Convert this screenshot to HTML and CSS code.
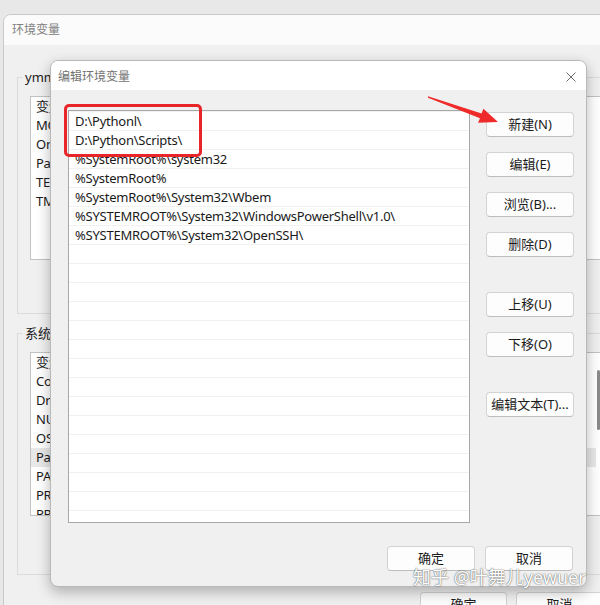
FILE: index.html
```html
<!DOCTYPE html>
<html lang="zh-CN">
<head>
<meta charset="utf-8">
<title>编辑环境变量</title>
<link rel="stylesheet" href="styles.css">
</head>
<body>
<div class="desktop">
  <div class="bgwin">
    <div class="bgwin-title">环境变量</div>
    <div class="bgwin-body">
      <div class="group group-user">
        <div class="group-label">ymm 的用户变量(U)</div>
        <div class="bglist">
          <div class="bgrows">
            <div class="bgrow head"><span class="c1">变量</span><span>值</span></div>
            <div class="bgrow"><span class="c1">MOZ_PLUGIN_PATH</span><span>C:\Program Files</span></div>
            <div class="bgrow"><span class="c1">OneDrive</span><span>C:\Users\ymm\OneDrive</span></div>
            <div class="bgrow"><span class="c1">Path</span><span>D:\Python\Scripts\</span></div>
            <div class="bgrow"><span class="c1">TEMP</span><span>C:\Users\ymm\AppData\Local\Temp</span></div>
            <div class="bgrow"><span class="c1">TMP</span><span>C:\Users\ymm\AppData\Local\Temp</span></div>
          </div>
        </div>
      </div>
      <div class="group group-sys">
        <div class="group-label">系统变量(S)</div>
        <div class="bglist">
          <div class="bgrows">
            <div class="bgrow head"><span class="c1">变量</span><span>值</span></div>
            <div class="bgrow"><span class="c1">ComSpec</span><span>C:\Windows\system32\cmd.exe</span></div>
            <div class="bgrow"><span class="c1">DriverData</span><span>C:\Windows\System32\Drivers\DriverData</span></div>
            <div class="bgrow"><span class="c1">NUMBER_OF_PROCESSORS</span><span>8</span></div>
            <div class="bgrow"><span class="c1">OS</span><span>Windows_NT</span></div>
            <div class="bgrow sel"><span class="c1">Path</span><span>%SystemRoot%\system32</span></div>
            <div class="bgrow"><span class="c1">PATHEXT</span><span>.COM;.EXE;.BAT;.CMD</span></div>
            <div class="bgrow"><span class="c1">PROCESSOR_ARCHITECTURE</span><span>AMD64</span></div>
            <div class="bgrow"><span class="c1">PROCESSOR_IDENTIFIER</span><span>Intel64 Family 6</span></div>
          </div>
          <div class="bgscroll"><div class="bgthumb"></div></div>
        </div>
      </div>
      <div class="bgbuttons">
        <div class="btn bgbtn">确定</div>
        <div class="btn bgbtn">取消</div>
      </div>
    </div>
  </div>

  <div class="dialog">
    <div class="dlg-title">
      <span>编辑环境变量</span>
      <svg class="close" width="10" height="10" viewBox="0 0 10 10"><path d="M0.5 0.5 L9.5 9.5 M9.5 0.5 L0.5 9.5" stroke="#6a6a6a" stroke-width="1" fill="none"/></svg>
    </div>
    <div class="dlg-body">
      <div class="dlg-main">
        <div class="pathlist">
          <div class="prow">D:\Pythonl\</div>
          <div class="prow">D:\Python\Scripts\</div>
          <div class="prow">%SystemRoot%\system32</div>
          <div class="prow">%SystemRoot%</div>
          <div class="prow">%SystemRoot%\System32\Wbem</div>
          <div class="prow">%SYSTEMROOT%\System32\WindowsPowerShell\v1.0\</div>
          <div class="prow">%SYSTEMROOT%\System32\OpenSSH\</div>
          <div class="prow"></div><div class="prow"></div><div class="prow"></div>
          <div class="prow"></div><div class="prow"></div><div class="prow"></div>
          <div class="prow"></div><div class="prow"></div><div class="prow"></div>
          <div class="prow"></div><div class="prow"></div><div class="prow"></div>
          <div class="prow"></div><div class="prow"></div><div class="prow"></div>
        </div>
        <div class="side">
          <div class="btn">新建(N)</div>
          <div class="btn">编辑(E)</div>
          <div class="btn">浏览(B)...</div>
          <div class="btn">删除(D)</div>
          <div class="btn gap">上移(U)</div>
          <div class="btn">下移(O)</div>
          <div class="btn gap">编辑文本(T)...</div>
        </div>
      </div>
      <div class="dlg-foot">
        <div class="btn">确定</div>
        <div class="btn">取消</div>
      </div>
    </div>
  </div>

  <div class="redbox"></div>
  <svg class="arrow" width="90" height="45" viewBox="0 0 90 45">
    <polygon points="8,11.3 61.6,28.4 63.4,23.8 78,37 58,37.8 60,33.2 8,12.7" fill="#ee2a2a"/>
  </svg>
  <div class="watermark">知乎 @叶舞儿yewuer</div>
</div>
</body>
</html>
```

FILE: styles.css
```css
* { box-sizing: border-box; }

html, body {
  margin: 0;
  padding: 0;
}

body {
  font-family: "Noto Sans", "Noto Sans CJK SC", sans-serif;
  font-size: 13px;
  color: #1a1a1a;
}

.desktop {
  position: relative;
  width: 600px;
  height: 605px;
  overflow: hidden;
  background: #e8e8e8;
}

/* background window */
.bgwin {
  position: absolute;
  left: 3px;
  top: 14px;
  width: 720px;
  height: 700px;
  background: #f0f0f0;
  border: 1px solid #c9c9c9;
  border-radius: 8px 0 0 0;
  overflow: hidden;
}

.bgwin-title {
  height: 30px;
  line-height: 30px;
  padding-left: 8px;
  background: #fbfbfb;
  color: #808080;
  font-size: 12px;
}

.bgwin-body {
  display: flex;
  flex-direction: column;
  padding-top: 32px;
}

.group {
  border: 1px solid #dcdcdc;
  margin-left: 13px;
  width: 680px;
  padding: 0 0 53px 12px;
}

.group-sys {
  margin-top: 19px;
  padding-bottom: 58px;
}

.group-label {
  width: max-content;
  margin: -10px 0 0 -8px;
  padding: 0 3px;
  line-height: 19px;
  background: #f0f0f0;
  color: #1a1a1a;
}

.bglist {
  display: flex;
  margin-top: 9px;
  height: 164px;
  width: 576px;
  background: #ffffff;
  border: 1px solid #c2c2c2;
  overflow: hidden;
}

.bgrows {
  flex: 1;
}

.bgrow {
  display: flex;
  height: 19px;
  line-height: 19px;
  padding-left: 5px;
  white-space: nowrap;
  letter-spacing: -0.25px;
}

.bgrow.sel {
  background: #e8e8e8;
}

.bgrow .c1 {
  width: 200px;
}

.bgscroll {
  width: 9px;
  padding: 17px 0 0 1px;
}

.bgthumb {
  width: 3px;
  height: 60px;
  background: #8a8a8a;
  border-radius: 2px;
}

.bgbuttons {
  display: flex;
  gap: 9px;
  margin: 17px 0 0 416px;
}

.bgbtn {
  width: 87px;
}

/* dialog */
.dialog {
  position: absolute;
  left: 50px;
  top: 60px;
  width: 537px;
  height: 527px;
  background: #f0f0f0;
  border: 1px solid #b9b9b9;
  border-radius: 8px;
  overflow: hidden;
  box-shadow: 0 5px 14px rgba(0, 0, 0, 0.28);
}

.dlg-title {
  display: flex;
  align-items: center;
  justify-content: space-between;
  height: 29px;
  padding: 0 10px 0 7px;
  background: #ffffff;
  color: #737373;
  font-size: 12px;
}

.dlg-title .close {
  display: block;
  margin-top: 2px;
}

.dlg-body {
  padding: 20px 0 0 17px;
}

.dlg-main {
  display: flex;
  align-items: flex-start;
  gap: 16px;
}

.pathlist {
  width: 402px;
  height: 413px;
  background: #ffffff;
  border: 1px solid #a8a8a8;
  overflow: hidden;
}

.prow {
  height: 19px;
  line-height: 19px;
  border-top: 1px solid #f1f1f1;
  padding-left: 6px;
  white-space: nowrap;
  letter-spacing: -0.25px;
}

.side {
  display: flex;
  flex-direction: column;
  gap: 15px;
  width: 88px;
  padding-top: 2px;
}

.btn {
  height: 25px;
  line-height: 23px;
  text-align: center;
  background: #fdfdfd;
  border: 1px solid #d3d3d3;
  border-bottom-color: #bdbdbd;
  border-radius: 4px;
  color: #1b1b1b;
  white-space: nowrap;
}

.side .btn.gap {
  margin-top: 20px;
}

.dlg-foot {
  display: flex;
  justify-content: flex-end;
  gap: 10px;
  margin-top: 23px;
  padding-right: 13px;
}

.dlg-foot .btn {
  width: 88px;
}

/* annotations */
.redbox {
  position: absolute;
  left: 64px;
  top: 104px;
  width: 138px;
  height: 53px;
  border: 3px solid #e8262a;
  border-radius: 5px;
}

.arrow {
  position: absolute;
  left: 420px;
  top: 85px;
}

.watermark {
  position: absolute;
  left: 413px;
  top: 566px;
  font-size: 18px;
  line-height: 22px;
  color: #ffffff;
  white-space: nowrap;
  text-shadow: 0 0 1px rgba(0, 0, 0, 0.6), 0 0 2px rgba(0, 0, 0, 0.4);
}
```
